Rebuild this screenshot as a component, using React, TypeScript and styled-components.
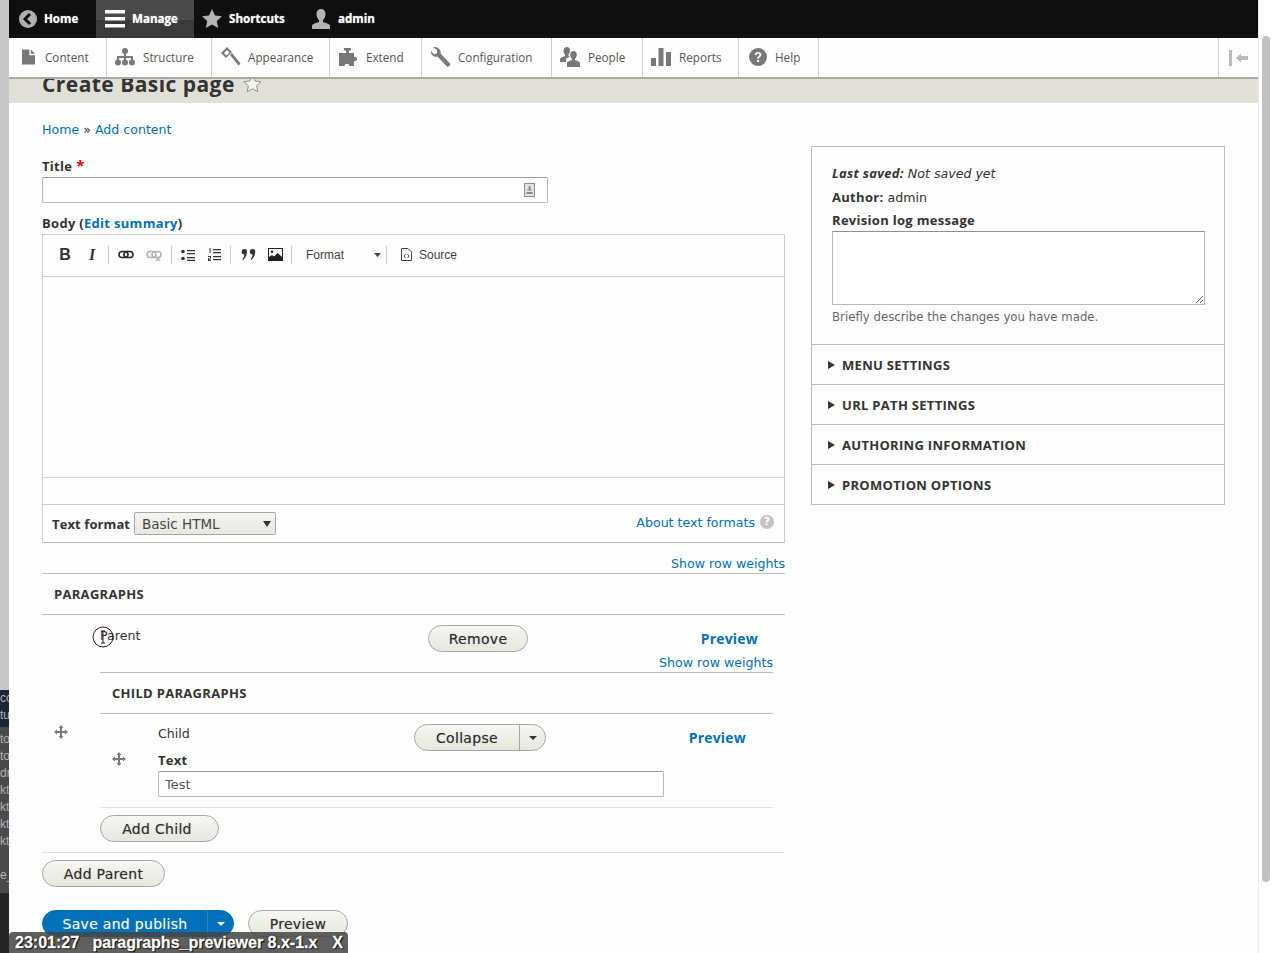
import styled, { createGlobalStyle } from 'styled-components';

const GlobalStyle = createGlobalStyle`
  html, body {
    margin: 0;
    padding: 0;
    height: 953px;
    overflow: hidden;
    background: #fff;
  }
  * { box-sizing: border-box; }
`

const body = `"DejaVu Sans", "Noto Sans", sans-serif`
const heavy = `"Open Sans", "DejaVu Sans", sans-serif`
const link = '#0071b8'

const Shell = styled.div`
  position: relative;
  display: flex;
  width: 1272px;
  height: 953px;
  overflow: hidden;
  font-family: ${body};
  font-size: 12.6px;
  color: #333;

  strong {
    font-family: ${heavy};
    font-size: 13px;
    letter-spacing: 0.3px;
  }
`

const Strip = styled.div`
  flex: 0 0 9px;
  display: flex;
  flex-direction: column;
  overflow: hidden;
`

const StripPane = styled.div<{ $h: number; $bg: string; $pt?: number }>`
  flex: 0 0 ${p => p.$h}px;
  padding-top: ${p => p.$pt ?? 0}px;
  background: ${p => p.$bg};
  font-family: "Liberation Sans", sans-serif;
  font-size: 12px;
  line-height: 17px;
  color: #b4b4b4;
  white-space: pre;
`

const Page = styled.div`
  flex: 1;
  min-width: 0;
  background: #fefefe;
`

const Gutter = styled.div`
  flex: 0 0 14px;
  padding: 36px 2px 0 3px;
  background: #fff;
  border-left: 1px solid #ececec;
`

const Thumb = styled.div`
  height: 846px;
  background: #c2c2c2;
  border-radius: 4px;
`

const TopBar = styled.div`
  display: flex;
  height: 38px;
  background: #0f0f0f;
  font-family: "Open Sans", sans-serif;
  font-size: 11.6px;
  font-weight: 700;
  color: #fff;
`

const TopItem = styled.div<{ $w: number; $pl: number; $active?: boolean }>`
  flex: 0 0 ${p => p.$w}px;
  display: flex;
  align-items: center;
  gap: 7px;
  padding: 0 0 1px ${p => p.$pl}px;
  text-shadow: 0 0 1px rgba(255, 255, 255, 0.7);
  background: ${p => p.$active ? 'linear-gradient(#4a4a4a 0, #4a4a4a 52%, #3a3a3a 52%, #3a3a3a 100%)' : 'transparent'};
`

const Tray = styled.div`
  display: flex;
  height: 41px;
  background: #fefefe;
  border-bottom: 2px solid #a8a8a4;
  font-family: "Open Sans", sans-serif;
  font-size: 11.7px;
  color: #565656;
`

const TrayItem = styled.div<{ $w: number }>`
  flex: 0 0 ${p => p.$w}px;
  display: flex;
  align-items: center;
  padding: 0 0 2px 8px;
  border-right: 1px solid #cfcfcf;
`

const TrayIcon = styled.span<{ $x: number }>`
  flex: 0 0 28px;
  display: flex;
  align-items: center;
  padding-left: ${p => p.$x}px;
`

const TrayToggle = styled.div`
  margin-left: auto;
  flex: 0 0 40px;
  display: flex;
  align-items: center;
  justify-content: center;
  border-left: 1px solid #cfcfcf;
`

const Header = styled.div`
  height: 24px;
  overflow: hidden;
  display: flex;
  align-items: flex-end;
  gap: 8px;
  padding: 0 0 6px 33px;
  background: #e0e0d8;
`

const PageTitle = styled.h1`
  margin: 0;
  font-family: ${heavy};
  font-size: 21px;
  line-height: 26px;
  font-weight: 700;
  letter-spacing: 0.45px;
  color: #333;
  white-space: nowrap;
`

const TitleStar = styled.span`
  display: flex;
  margin-bottom: 4px;
`

const Main = styled.div`
  padding: 0 33px;
`

const Crumbs = styled.div`
  height: 43px;
  padding-top: 19px;
  line-height: 16px;
  color: #333;
`

const A = styled.a<{ $bold?: boolean }>`
  color: ${link};
  font-family: ${p => p.$bold ? heavy : body};
  font-weight: ${p => p.$bold ? 700 : 400};
  text-decoration: none;
`

const Columns = styled.div`
  display: grid;
  grid-template-columns: 743px 414px;
  column-gap: 26px;
  align-items: start;
`

const LeftColumn = styled.div`
  padding-top: 11px;
`

const Label = styled.label<{ $mt?: number }>`
  display: block;
  margin-top: ${p => p.$mt ?? 0}px;
  font-family: ${heavy};
  font-weight: 700;
  font-size: 13px;
  letter-spacing: 0.3px;
  line-height: 16px;
`

const Required = styled.span`
  color: #e00;
  font-size: 15px;
  line-height: 16px;
  margin-left: 4px;
`

const FieldWrap = styled.div<{ $mt: number }>`
  position: relative;
  width: 506px;
  margin-top: ${p => p.$mt}px;
`

const TextInput = styled.input`
  display: block;
  width: 100%;
  height: 26px;
  padding: 0 6px;
  border: 1px solid #b8b8b8;
  border-top-color: #999;
  border-radius: 2px;
  background: #fff;
  font-family: ${body};
  font-size: 13px;
  color: #555;
`

const InputBadge = styled.span`
  position: absolute;
  right: 13px;
  top: 6px;
  display: flex;
`

const Editor = styled.div`
  margin-top: 3px;
  border: 1px solid #cfcfcf;
  border-bottom-color: #bdbdbd;
`

const EditorBar = styled.div`
  display: flex;
  align-items: center;
  height: 42px;
  padding: 0 0 2px 8px;
  border-bottom: 1px solid #d4d4d4;
  font-family: "Liberation Sans", sans-serif;
  font-size: 12px;
  color: #444;
`

const Tool = styled.span<{ $w: number }>`
  flex: 0 0 ${p => p.$w}px;
  display: flex;
  align-items: center;
  justify-content: center;
  height: 18px;
`

const ToolB = styled.span`
  font: 700 16px "Liberation Sans", sans-serif;
  color: #333;
`

const ToolI = styled.span`
  font: italic 700 16px "Liberation Serif", serif;
  color: #333;
`

const ToolSep = styled.span`
  flex: 0 0 1px;
  height: 18px;
  background: #c8c8c8;
  margin: 0 3px;
`

const FormatCombo = styled.span`
  flex: 0 0 88px;
  display: flex;
  align-items: center;
  justify-content: space-between;
  padding: 0 2px 0 11px;
`

const Source = styled.span`
  display: flex;
  align-items: center;
  gap: 7px;
  margin-left: 11px;
`

const EditArea = styled.div`
  height: 201px;
  border-bottom: 1px solid #d4d4d4;
`

const PathBar = styled.div`
  height: 27px;
  border-bottom: 1px solid #cfcfcf;
`

const FormatRow = styled.div`
  display: flex;
  align-items: center;
  height: 37px;
  padding: 0 10px 0 9px;
  gap: 4px;
`

const FormatLabel = styled.span`
  width: 78px;
  font-family: ${heavy};
  font-size: 13px;
  letter-spacing: 0.1px;
  font-weight: 700;
  white-space: nowrap;
  padding-top: 1px;
`

const SelectWrap = styled.span`
  position: relative;
  display: block;
  width: 142px;
  height: 23px;
`

const Select = styled.select`
  appearance: none;
  display: block;
  width: 100%;
  height: 100%;
  padding: 0 7px;
  border: 1px solid #a8a8a8;
  border-radius: 2px;
  background: linear-gradient(#f4f4f0, #e8e8e2);
  font-family: ${body};
  font-size: 13.500px;
  color: #444;
`

const SelectCaret = styled.span`
  position: absolute;
  right: 5px;
  top: 9px;
  border: 4.500px solid transparent;
  border-top: 6px solid #333;
  border-bottom: 0;
`

const FormatHelp = styled.span`
  margin-left: auto;
  display: flex;
  align-items: center;
  gap: 5px;
  padding-bottom: 3px;
`

const HelpDot = styled.span`
  width: 14px;
  height: 14px;
  border-radius: 50%;
  background: #c4c4c4;
  color: #fff;
  font-size: 11px;
  font-weight: 700;
  line-height: 14px;
  text-align: center;
`

const WeightsRow = styled.div<{ $h: number }>`
  height: ${p => p.$h}px;
  display: flex;
  align-items: flex-end;
  justify-content: flex-end;
  padding-bottom: 1px;
  border-bottom: 1px solid #bdbdbd;
  line-height: 16px;
`

const TableHead = styled.div<{ $pl: number }>`
  height: 41px;
  display: flex;
  align-items: center;
  padding-left: ${p => p.$pl}px;
  border-bottom: 1px solid #bdbdbd;
  font-family: ${heavy};
  font-size: 13px;
  font-weight: 700;
  letter-spacing: 0.3px;
`

const Row = styled.div`
  display: flex;
  align-items: center;
  border-bottom: 1px solid #e4e4e0;
`

const Handle = styled.span`
  flex: 0 0 58px;
  padding-left: 12px;
  margin-top: -3px;
  display: flex;
`

const RowBody = styled.div`
  flex: 1;
  min-width: 0;
`

const Nested = styled.div`
  width: 673px;
`

const ParaHead = styled.div<{ $type: number; $pt: number; $pr: number }>`
  display: grid;
  grid-template-columns: ${p => p.$type}px auto 1fr;
  align-items: start;
  padding: ${p => p.$pt}px ${p => p.$pr}px 0 0;
`

const ParaType = styled.div<{ $pt: number }>`
  position: relative;
  line-height: 16px;
  padding-top: ${p => p.$pt}px;
`

const CursorRing = styled.span`
  position: absolute;
  left: -8px;
  top: 1px;
  display: flex;
`

const Preview = styled.a`
  justify-self: end;
  color: ${link};
  font-family: ${heavy};
  font-size: 14px;
  font-weight: 700;
  letter-spacing: 0.2px;
  line-height: 28px;
  text-decoration: none;
`

const Pill = styled.button<{ $w: number; $pr?: number }>`
  display: flex;
  align-items: center;
  justify-content: center;
  width: ${p => p.$w}px;
  height: 27px;
  padding: 0 ${p => p.$pr ?? 0}px 0 0;
  border: 1px solid #a6a6a6;
  border-radius: 14px;
  background: linear-gradient(#f6f6f3, #e7e7df);
  font-family: ${body};
  font-size: 14px;
  letter-spacing: 0.3px;
  color: #2c2c2c;
  text-shadow: 0 0 1px rgba(0, 0, 0, 0.3);
`

const SplitPill = styled.div<{ $w: number; $primary?: boolean }>`
  display: flex;
  width: ${p => p.$w}px;
  height: 27px;
  border: 1px solid ${p => p.$primary ? '#0071b8' : '#a6a6a6'};
  border-radius: 14px;
  overflow: hidden;
  background: ${p => p.$primary ? '#0071b8' : 'linear-gradient(#f6f6f3, #e7e7df)'};
  color: ${p => p.$primary ? '#fff' : '#2c2c2c'};
  font-size: 14px;
  letter-spacing: 0.3px;
  text-shadow: 0 0 1px ${p => p.$primary ? 'rgba(255, 255, 255, 0.3)' : 'rgba(0, 0, 0, 0.3)'};
`

const SplitMain = styled.span`
  flex: 1;
  display: flex;
  align-items: center;
  justify-content: center;
`

const SplitCaret = styled.span<{ $primary?: boolean }>`
  flex: 0 0 26px;
  display: flex;
  align-items: center;
  justify-content: center;
  border-left: 1px solid ${p => p.$primary ? '#2a86c4' : '#a6a6a6'};

  &::after {
    content: '';
    border: 4px solid transparent;
    border-top: 4.500px solid ${p => p.$primary ? '#fff' : '#333'};
    border-bottom: 0;
  }
`

const ChildField = styled.div`
  padding: 0 0 10px 0;
`

const AddRow = styled.div<{ $h: number }>`
  height: ${p => p.$h}px;
  padding-top: 7px;
`

const ActionRow = styled.div`
  display: flex;
  gap: 14px;
  padding-top: 22px;
`

const Side = styled.aside`
  border: 1px solid #bebfb9;
`

const Meta = styled.div`
  height: 197px;
  padding: 18px 19px 0 20px;
  line-height: 16px;
`

const MetaLine = styled.div<{ $mb: number }>`
  margin-bottom: ${p => p.$mb}px;
`

const LogArea = styled.textarea`
  display: block;
  width: 100%;
  height: 74px;
  margin-top: 3px;
  border: 1px solid #b8b8b8;
  border-top-color: #8f8f8f;
  border-radius: 1px;
  background: #fff;
  resize: vertical;
`

const Hint = styled.div`
  margin-top: 4px;
  font-size: 11.750px;
  line-height: 16px;
  color: #666;
`

const Fold = styled.div`
  display: flex;
  align-items: center;
  gap: 7px;
  height: 40px;
  padding-left: 16px;
  border-top: 1px solid #bebfb9;
  font-family: ${heavy};
  font-size: 13px;
  font-weight: 700;
  letter-spacing: 0.3px;
  color: #333;

  &::before {
    content: '';
    border: 4.500px solid transparent;
    border-left: 7px solid #333;
    border-right: 0;
  }
`

const TimeBadge = styled.div`
  position: absolute;
  left: 9px;
  bottom: 0;
  width: 339px;
  height: 21px;
  display: flex;
  align-items: center;
  padding: 0 5px 0 6px;
  border-radius: 4px 4px 0 0;
  background: rgba(70, 70, 70, 0.86);
  font-family: "Liberation Sans", sans-serif;
  font-size: 16px;
  font-weight: 700;
  color: #fff;
  text-shadow: 0 0 2px #000, 1px 1px 1px #000;
  -webkit-text-stroke: 0.3px #fff;
  white-space: pre;
`

const BadgeClose = styled.span`
  margin-left: auto;
`

const gray = '#787878'

const HomeIcon = () => (
  <svg width="18" height="18" viewBox="0 0 18 18">
    <circle cx="9" cy="9" r="9" fill="#b0b0b0" />
    <path d="M11 4 6 9l5 5" fill="none" stroke="#0f0f0f" strokeWidth="3" />
  </svg>
)

const BarsIcon = () => (
  <svg width="20" height="18" viewBox="0 0 20 18">
    <path d="M0 0h20v3.500H0zM0 7h20v3.500H0zM0 14h20v3.500H0z" fill="#fff" />
  </svg>
)

const StarIcon = () => (
  <svg width="20" height="19" viewBox="0 0 20 19">
    <path d="M10 0l3 6.500 7 .8-5.200 4.700 1.400 7L10 15.500 3.800 19l1.400-7L0 7.300l7-.8z" fill="#b4b4b4" />
  </svg>
)

const UserIcon = () => (
  <svg width="20" height="20" viewBox="0 0 20 20">
    <path d="M10 0c3 0 4.500 2.300 4.500 5 0 2.500-1 4.800-2.500 6v2c2 .8 6 1.500 7 3.500V20H1v-3.500c1-2 5-2.700 7-3.500v-2C6.500 9.800 5.500 7.500 5.500 5 5.500 2.300 7 0 10 0z" fill="#b4b4b4" />
  </svg>
)

const DocIcon = () => (
  <svg width="13" height="16" viewBox="0 0 14 16">
    <path d="M0 0h8v6h6v10H0zM9.500 0 14 4.500H9.500z" fill={gray} />
  </svg>
)

const TreeIcon = () => (
  <svg width="20" height="18" viewBox="0 0 20 18">
    <g fill={gray}>
      <circle cx="10" cy="3" r="3" />
      <circle cx="3" cy="14.500" r="3" />
      <circle cx="10" cy="14.500" r="3" />
      <circle cx="17" cy="14.500" r="3" />
      <path d="M9 5h2v3h7v5h-2v-3h-5v3H9v-3H4v3H2V8h7z" />
    </g>
  </svg>
)

const BrushIcon = () => (
  <svg width="20" height="19" viewBox="0 0 20 19">
    <path d="M6 0 0 6l5 5 6-6zM6 3 3 6l2.500 2.500 3-3z" fill={gray} fillRule="evenodd" />
    <path d="M9 8l2-2 8.500 10.500-2 2z" fill={gray} />
  </svg>
)

const PuzzleIcon = () => (
  <svg width="20" height="18" viewBox="0 0 20 18">
    <path d="M5 0h7v2.500H10V5h5v4a2.200 2.200 0 1 1 0 4v5h-4.500c0-3-5-3-5 0H0V5h7V2.500H5z" fill={gray} />
  </svg>
)

const WrenchIcon = () => (
  <svg width="20" height="20" viewBox="0 0 20 20">
    <path d="M2 0l4 3v3L3 7.500 0 4C-.5 8 3 10.500 6.500 9.500L16 19.500c1 1 4-1.500 3-3L9.500 6.500C10.500 3 7 -.5 2 0z" fill={gray} />
  </svg>
)

const PeopleIcon = () => (
  <svg width="20" height="20" viewBox="0 0 20 20">
    <g fill={gray}>
      <path d="M7 0c2 0 3 1.500 3 3.500 0 1.800-.7 3.200-1.500 4v1.500c.5.200 1 .4 1.400.6-1.200.8-2.900 1.500-3.900 2.400V15H0v-3c.6-1.400 3-2 5-3V7.500C4 6.700 3.500 5.300 3.500 3.500 3.500 1.500 5 0 7 0z" />
      <path d="M13.500 4c2.200 0 3.300 1.600 3.300 3.500 0 1.800-.8 3.300-1.800 4.200V13c1.500.7 4 1.100 5 2.700V20H7v-4.300c1-1.600 3.500-2 5-2.700v-1.300c-1-.9-1.800-2.400-1.800-4.200C10.200 5.600 11.300 4 13.500 4z" />
    </g>
  </svg>
)

const ChartIcon = () => (
  <svg width="20" height="18" viewBox="0 0 20 18">
    <path d="M0 10h5v8H0zM7.500 0h5v18h-5zM15 4h5v14h-5z" fill={gray} />
  </svg>
)

const HelpIcon = () => (
  <svg width="18" height="18" viewBox="0 0 18 18">
    <circle cx="9" cy="9" r="9" fill={gray} />
    <path d="M5.800 7c0-2 1.500-3 3.300-3 1.900 0 3.300 1 3.300 2.700 0 2.300-2.400 2.200-2.400 4H8.200c0-2.700 2.300-2.600 2.300-4 0-.7-.6-1.100-1.400-1.100-.9 0-1.400.5-1.400 1.400zM8.200 12h1.900v2H8.200z" fill="#fff" />
  </svg>
)

const CollapseIcon = () => (
  <svg width="19" height="16" viewBox="0 0 19 16">
    <path d="M0 0h3v16H0zM7 8l5-4.500V6h7v4h-7v2.500z" fill="#bbb" />
  </svg>
)

const OutlineStar = () => (
  <svg width="19" height="19" viewBox="0 0 20 19">
    <path d="M10 1l2.700 5.900 6.300.7-4.700 4.300 1.300 6.300L10 15l-5.600 3.200 1.300-6.300L1 7.600l6.300-.7z" fill="#f4f4f0" stroke="#8f8f80" />
  </svg>
)

const ContactIcon = () => (
  <svg width="11" height="14" viewBox="0 0 11 14">
    <rect x="0.500" y="0.500" width="10" height="13" fill="#e4e4e4" stroke="#8c8c8c" />
    <path d="M4.500 3h2v3.500h1.500v1H3v-1h1.500zM2.500 9h6v2h-6z" fill="#8a8a8a" />
  </svg>
)

const LinkIcon = ({ off }: { off?: boolean }) => (
  <svg width="16" height="14" viewBox="0 0 16 14">
    <g fill="none" stroke={off ? '#b5b5b5' : '#222'} strokeWidth="1.600">
      <rect x="1" y="3.500" width="9" height="6" rx="3" />
      <rect x="6" y="3.500" width="9" height="6" rx="3" />
    </g>
    {off ? <path d="M10 9l4 4m0-4-4 4" stroke="#b5b5b5" strokeWidth="1.300" /> : null}
  </svg>
)

const BulletIcon = () => (
  <svg width="14" height="12" viewBox="0 0 14 12">
    <circle cx="2" cy="2.500" r="1.800" fill="#333" />
    <circle cx="2" cy="9.500" r="1.800" fill="#333" />
    <path d="M6 1h8v1.200H6zM6 4h8v1.200H6zM6 8h8v1.200H6zM6 10.800h8V12H6z" fill="#333" />
  </svg>
)

const NumberIcon = () => (
  <svg width="13" height="13" viewBox="0 0 13 13">
    <path d="M1.500 0h1v5h-1zM0 8h3v2.500H1v1h2V13H0v-3h2V9H0zM5 1h8v1.200H5zM5 4h8v1.200H5zM5 8h8v1.200H5zM5 11h8v1.200H5z" fill="#333" />
  </svg>
)

const QuoteIcon = () => (
  <svg width="15" height="11" viewBox="0 0 15 12">
    <path d="M3 0a2.800 2.800 0 0 1 2.800 3.200C5.800 6.500 4 9.800 1.500 12L.8 11.200C2 10 2.800 8 3 6A3 3 0 0 1 3 0zM12 0a2.800 2.800 0 0 1 2.800 3.200c0 3.300-1.800 6.600-4.300 8.800l-.7-.8C11 10 11.800 8 12 6a3 3 0 0 1 0-6z" fill="#333" />
  </svg>
)

const ImageIcon = () => (
  <svg width="15" height="13" viewBox="0 0 15 13">
    <rect x="0.500" y="0.500" width="14" height="12" fill="#fff" stroke="#222" />
    <circle cx="4" cy="3.800" r="1.300" fill="#222" />
    <path d="M1 12V9l3-2 2 1.500L9.500 5 14 9v3z" fill="#222" />
  </svg>
)

const SourceIcon = () => (
  <svg width="11" height="13" viewBox="0 0 11 13">
    <path d="M.5.500h6.500l3.500 3.500v8.500H.5z" fill="#fff" stroke="#444" />
    <path d="M4.500 6 3 8l1.500 2M6.500 6 8 8l-1.500 2" fill="none" stroke="#444" />
  </svg>
)

const MoveIcon = () => (
  <svg width="14" height="14" viewBox="0 0 14 14">
    <path d="M7 0l2.500 3H8v3h3V4.500L14 7l-3 2.500V8H8v3h1.500L7 14l-2.500-3H6V8H3v1.500L0 7l3-2.500V6h3V3H4.500z" fill="#787878" />
  </svg>
)

const TextCursor = () => (
  <svg width="22" height="22" viewBox="0 0 22 22">
    <circle cx="11" cy="11" r="10" fill="none" stroke="#222" />
    <path d="M9 5h4M11 5v12M9 17h4" fill="none" stroke="#222" />
  </svg>
)

const CaretDown = () => (
  <svg width="7" height="4" viewBox="0 0 7 4">
    <path d="M0 0h7L3.500 4z" fill="#444" />
  </svg>
)

const tray = [
  { label: 'Content', w: 98, x: 5, icon: <DocIcon /> },
  { label: 'Structure', w: 105, x: 0, icon: <TreeIcon /> },
  { label: 'Appearance', w: 118, x: 1, icon: <BrushIcon /> },
  { label: 'Extend', w: 92, x: 1, icon: <PuzzleIcon /> },
  { label: 'Configuration', w: 130, x: 1, icon: <WrenchIcon /> },
  { label: 'People', w: 91, x: 0, icon: <PeopleIcon /> },
  { label: 'Reports', w: 96, x: 0, icon: <ChartIcon /> },
  { label: 'Help', w: 80, x: 2, icon: <HelpIcon /> },
]

const folds = ['Menu settings', 'URL path settings', 'Authoring information', 'Promotion options']

export default function App() {
  return (
    <Shell>
      <GlobalStyle />
      <Strip>
        <StripPane $h={690} $bg="#c8c8c8" />
        <StripPane $h={37} $bg="#1c2534">{'cc\ntu'}</StripPane>
        <StripPane $h={166} $bg="#4a4a4a" $pt={4}>{'to\nto\ndr\nkt\nkt\nkt\nkt\n\ne_'}</StripPane>
        <StripPane $h={60} $bg="#262626" />
      </Strip>
      <Page>
        <TopBar>
          <TopItem $w={87} $pl={10}><HomeIcon />Home</TopItem>
          <TopItem $w={98} $pl={9} $active><BarsIcon /><span>Manage</span></TopItem>
          <TopItem $w={109} $pl={8}><StarIcon />Shortcuts</TopItem>
          <TopItem $w={90} $pl={8}><UserIcon />admin</TopItem>
        </TopBar>
        <Tray>
          {tray.map(t => (
            <TrayItem key={t.label} $w={t.w}>
              <TrayIcon $x={t.x}>{t.icon}</TrayIcon>
              {t.label}
            </TrayItem>
          ))}
          <TrayToggle><CollapseIcon /></TrayToggle>
        </Tray>
        <Header>
          <PageTitle>Create Basic page</PageTitle>
          <TitleStar><OutlineStar /></TitleStar>
        </Header>
        <Main>
          <Crumbs>
            <A href="#">Home</A> » <A href="#">Add content</A>
          </Crumbs>
          <Columns>
            <LeftColumn>
              <Label>Title<Required>*</Required></Label>
              <FieldWrap $mt={3}>
                <TextInput />
                <InputBadge><ContactIcon /></InputBadge>
              </FieldWrap>
              <Label $mt={12}>Body (<A href="#" $bold>Edit summary</A>)</Label>
              <Editor>
                <EditorBar>
                  <Tool $w={28}><ToolB>B</ToolB></Tool>
                  <Tool $w={26}><ToolI>I</ToolI></Tool>
                  <ToolSep />
                  <Tool $w={28}><LinkIcon /></Tool>
                  <Tool $w={28}><LinkIcon off /></Tool>
                  <ToolSep />
                  <Tool $w={26}><BulletIcon /></Tool>
                  <Tool $w={26}><NumberIcon /></Tool>
                  <ToolSep />
                  <Tool $w={28}><QuoteIcon /></Tool>
                  <Tool $w={26}><ImageIcon /></Tool>
                  <ToolSep />
                  <FormatCombo>Format<CaretDown /></FormatCombo>
                  <ToolSep />
                  <Source><SourceIcon />Source</Source>
                </EditorBar>
                <EditArea />
                <PathBar />
                <FormatRow>
                  <FormatLabel>Text format</FormatLabel>
                  <SelectWrap>
                    <Select defaultValue="basic">
                      <option value="basic">Basic HTML</option>
                    </Select>
                    <SelectCaret />
                  </SelectWrap>
                  <FormatHelp><A href="#">About text formats</A><HelpDot>?</HelpDot></FormatHelp>
                </FormatRow>
              </Editor>
              <WeightsRow $h={31}><A href="#">Show row weights</A></WeightsRow>
              <TableHead $pl={12}>PARAGRAPHS</TableHead>
              <Row>
                <Handle><MoveIcon /></Handle>
                <RowBody>
                  <ParaHead $type={328} $pt={10} $pr={27}>
                    <ParaType $pt={3}>Parent<CursorRing><TextCursor /></CursorRing></ParaType>
                    <Pill $w={100}>Remove</Pill>
                    <Preview href="#">Preview</Preview>
                  </ParaHead>
                  <Nested>
                    <WeightsRow $h={20}><A href="#">Show row weights</A></WeightsRow>
                    <TableHead $pl={12}>CHILD PARAGRAPHS</TableHead>
                    <Row>
                      <Handle><MoveIcon /></Handle>
                      <RowBody>
                        <ParaHead $type={256} $pt={10} $pr={27}>
                          <ParaType $pt={2}>Child</ParaType>
                          <SplitPill $w={132}><SplitMain>Collapse</SplitMain><SplitCaret /></SplitPill>
                          <Preview href="#">Preview</Preview>
                        </ParaHead>
                        <ChildField>
                          <Label>Text</Label>
                          <FieldWrap $mt={3}>
                            <TextInput defaultValue="Test" />
                          </FieldWrap>
                        </ChildField>
                      </RowBody>
                    </Row>
                    <AddRow $h={44}><Pill $w={119} $pr={5}>Add Child</Pill></AddRow>
                  </Nested>
                </RowBody>
              </Row>
              <AddRow $h={35}><Pill $w={123}>Add Parent</Pill></AddRow>
              <ActionRow>
                <SplitPill $w={192} $primary><SplitMain>Save and publish</SplitMain><SplitCaret $primary /></SplitPill>
                <Pill $w={100}>Preview</Pill>
              </ActionRow>
            </LeftColumn>
            <Side>
              <Meta>
                <MetaLine $mb={7}><em><strong>Last saved:</strong> Not saved yet</em></MetaLine>
                <MetaLine $mb={6}><strong>Author:</strong> admin</MetaLine>
                <Label>Revision log message</Label>
                <LogArea />
                <Hint>Briefly describe the changes you have made.</Hint>
              </Meta>
              {folds.map(f => (
                <Fold key={f}>{f.toUpperCase()}</Fold>
              ))}
            </Side>
          </Columns>
        </Main>
      </Page>
      <Gutter><Thumb /></Gutter>
      <TimeBadge>23:01:27   paragraphs_previewer 8.x-1.x<BadgeClose>X</BadgeClose></TimeBadge>
    </Shell>
  );
}
